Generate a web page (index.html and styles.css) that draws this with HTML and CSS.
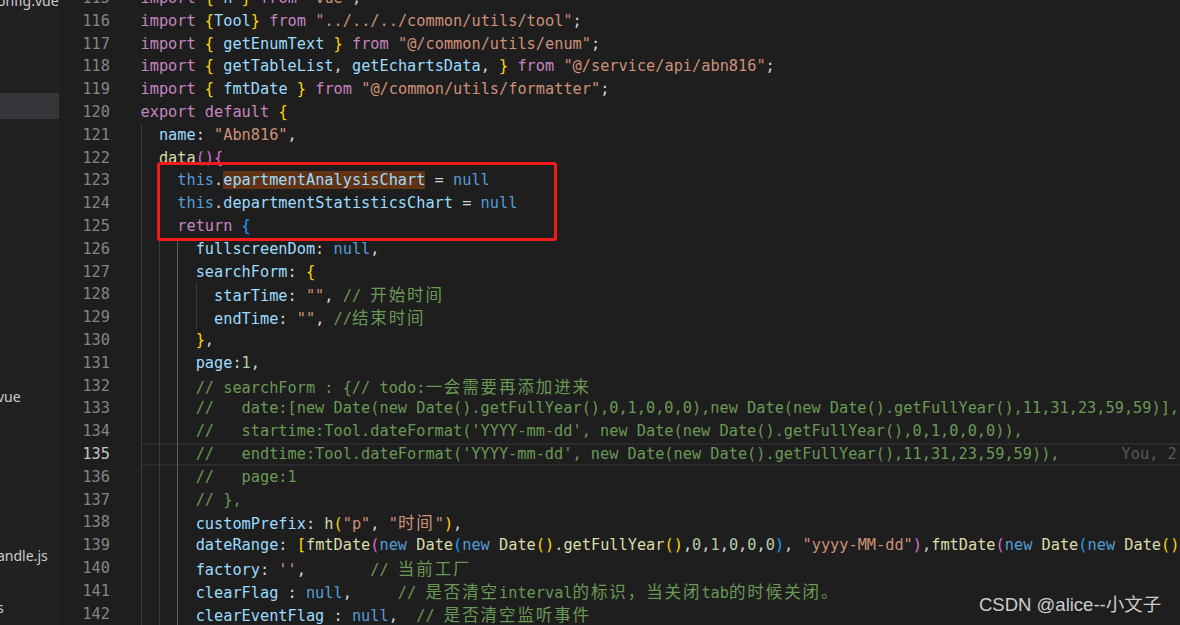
FILE: index.html
```html
<!DOCTYPE html>
<html lang="zh-CN">

<head>
    <meta charset="UTF-8">
    <meta name="viewport" content="width=device-width, initial-scale=1.0">
    <title>Abn816.vue</title>
    <link rel="stylesheet" href="styles.css">
</head>

<body>

    <div class="window">

        <!-- 文件树 (被横向滚动裁掉了) -->
        <div class="sidebar">
            <div class="tree">
                <div class="item">onfig.vue</div>
                <div class="item"></div>
                <div class="item"></div>
                <div class="item"></div>
                <div class="item active"></div>
                <div class="item"></div>
                <div class="item"></div>
                <div class="item"></div>
                <div class="item"></div>
                <div class="item"></div>
                <div class="item"></div>
                <div class="item"></div>
                <div class="item"></div>
                <div class="item"></div>
                <div class="item"></div>
                <div class="item">vue</div>
                <div class="item"></div>
                <div class="item"></div>
                <div class="item"></div>
                <div class="item"></div>
                <div class="item"></div>
                <div class="item">andle.js</div>
                <div class="item"></div>
                <div class="item">s</div>
            </div>
        </div>

        <!-- 编辑器 -->
        <div class="editor">
            <div class="lines">
                <div class="line"><span class="num">115</span><span class="src"><span class="kw">import</span> <span class="b1">{</span> <span class="vr">h</span> <span class="b1">}</span> <span class="kw">from</span> <span class="s">"vue"</span>;</span></div>
                <div class="line"><span class="num">116</span><span class="src"><span class="kw">import</span> <span class="b1">{</span><span class="vr">Tool</span><span class="b1">}</span> <span class="kw">from</span> <span class="s">"../../../common/utils/tool"</span>;</span></div>
                <div class="line"><span class="num">117</span><span class="src"><span class="kw">import</span> <span class="b1">{</span> <span class="vr">getEnumText</span> <span class="b1">}</span> <span class="kw">from</span> <span class="s">"@/common/utils/enum"</span>;</span></div>
                <div class="line"><span class="num">118</span><span class="src"><span class="kw">import</span> <span class="b1">{</span> <span class="vr">getTableList</span>, <span class="vr">getEchartsData</span>, <span class="b1">}</span> <span class="kw">from</span> <span class="s">"@/service/api/abn816"</span>;</span></div>
                <div class="line"><span class="num">119</span><span class="src"><span class="kw">import</span> <span class="b1">{</span> <span class="vr">fmtDate</span> <span class="b1">}</span> <span class="kw">from</span> <span class="s">"@/common/utils/formatter"</span>;</span></div>
                <div class="line"><span class="num">120</span><span class="src"><span class="kw">export</span> <span class="kw">default</span> <span class="b1">{</span></span></div>
                <div class="line"><span class="num">121</span><span class="src"><span class="g"></span><span class="vr">name</span>: <span class="s">"Abn816"</span>,</span></div>
                <div class="line"><span class="num">122</span><span class="src"><span class="g"></span><span class="fn">data</span><span class="b2">(){</span></span></div>
                <div class="line"><span class="num">123</span><span class="src"><span class="g"></span><span class="g"></span><span class="st">this</span>.<span class="vr find">epartmentAnalysisChart</span> = <span class="st">null</span></span></div>
                <div class="line"><span class="num">124</span><span class="src"><span class="g"></span><span class="g"></span><span class="st">this</span>.<span class="vr">departmentStatisticsChart</span> = <span class="st">null</span></span></div>
                <div class="line"><span class="num">125</span><span class="src"><span class="g"></span><span class="g"></span><span class="kw">return</span> <span class="b3">{</span></span></div>
                <div class="line"><span class="num">126</span><span class="src"><span class="g"></span><span class="g"></span><span class="g on"></span><span class="vr">fullscreenDom</span>: <span class="st">null</span>,</span></div>
                <div class="line"><span class="num">127</span><span class="src"><span class="g"></span><span class="g"></span><span class="g on"></span><span class="vr">searchForm</span>: <span class="b1">{</span></span></div>
                <div class="line"><span class="num">128</span><span class="src"><span class="g"></span><span class="g"></span><span class="g on"></span><span class="g"></span><span class="vr">starTime</span>: <span class="s">""</span>, <span class="c">// <span class="zh">开始时间</span></span></span></div>
                <div class="line"><span class="num">129</span><span class="src"><span class="g"></span><span class="g"></span><span class="g on"></span><span class="g"></span><span class="vr">endTime</span>: <span class="s">""</span>, <span class="c">//<span class="zh">结束时间</span></span></span></div>
                <div class="line"><span class="num">130</span><span class="src"><span class="g"></span><span class="g"></span><span class="g on"></span><span class="b1">}</span>,</span></div>
                <div class="line"><span class="num">131</span><span class="src"><span class="g"></span><span class="g"></span><span class="g on"></span><span class="vr">page</span>:<span class="n">1</span>,</span></div>
                <div class="line"><span class="num">132</span><span class="src"><span class="g"></span><span class="g"></span><span class="g on"></span><span class="c">// searchForm : {// todo:<span class="zh">一会需要再添加进来</span></span></span></div>
                <div class="line"><span class="num">133</span><span class="src"><span class="g"></span><span class="g"></span><span class="g on"></span><span class="c">//   date:[new Date(new Date().getFullYear(),0,1,0,0,0),new Date(new Date().getFullYear(),11,31,23,59,59)],</span></span></div>
                <div class="line"><span class="num">134</span><span class="src"><span class="g"></span><span class="g"></span><span class="g on"></span><span class="c">//   startime:Tool.dateFormat('YYYY-mm-dd', new Date(new Date().getFullYear(),0,1,0,0,0)),</span></span></div>
                <div class="line current"><span class="num">135</span><span class="src"><span class="g"></span><span class="g"></span><span class="g on"></span><span class="c">//   endtime:Tool.dateFormat('YYYY-mm-dd', new Date(new Date().getFullYear(),11,31,23,59,59)),</span><span class="blame">You, 2 weeks ago • Uncommitted changes</span></span></div>
                <div class="line"><span class="num">136</span><span class="src"><span class="g"></span><span class="g"></span><span class="g on"></span><span class="c">//   page:1</span></span></div>
                <div class="line"><span class="num">137</span><span class="src"><span class="g"></span><span class="g"></span><span class="g on"></span><span class="c">// },</span></span></div>
                <div class="line"><span class="num">138</span><span class="src"><span class="g"></span><span class="g"></span><span class="g on"></span><span class="vr">customPrefix</span>: <span class="fn">h</span><span class="b1">(</span><span class="s">"p"</span>, <span class="s">"<span class="zh">时间</span>"</span><span class="b1">)</span>,</span></div>
                <div class="line"><span class="num">139</span><span class="src"><span class="g"></span><span class="g"></span><span class="g on"></span><span class="vr">dateRange</span>: <span class="b1">[</span><span class="fn">fmtDate</span><span class="b2">(</span><span class="st">new</span> <span class="fn">Date</span><span class="b3">(</span><span class="st">new</span> <span class="fn">Date</span><span class="b1">()</span>.<span class="fn">getFullYear</span><span class="b1">()</span>,<span class="n">0</span>,<span class="n">1</span>,<span class="n">0</span>,<span class="n">0</span>,<span class="n">0</span><span class="b3">)</span>, <span class="s">"yyyy-MM-dd"</span><span class="b2">)</span>,<span class="fn">fmtDate</span><span class="b2">(</span><span class="st">new</span> <span class="fn">Date</span><span class="b3">(</span><span class="st">new</span> <span class="fn">Date</span><span class="b1">()</span>.<span class="fn">getFullYear</span><span class="b1">()</span>,<span class="n">11</span>,<span class="n">31</span>,<span class="n">23</span>,<span class="n">59</span>,<span class="n">59</span><span class="b3">)</span>, <span class="s">"yyyy-MM-dd"</span><span class="b2">)</span><span class="b1">]</span>,</span></div>
                <div class="line"><span class="num">140</span><span class="src"><span class="g"></span><span class="g"></span><span class="g on"></span><span class="vr">factory</span>: <span class="s">''</span>,       <span class="c">// <span class="zh">当前工厂</span></span></span></div>
                <div class="line"><span class="num">141</span><span class="src"><span class="g"></span><span class="g"></span><span class="g on"></span><span class="vr">clearFlag</span> : <span class="st">null</span>,     <span class="c">// <span class="zh">是否清空</span>interval<span class="zh">的标识，当关闭</span>tab<span class="zh">的时候关闭。</span></span></span></div>
                <div class="line"><span class="num">142</span><span class="src"><span class="g"></span><span class="g"></span><span class="g on"></span><span class="vr">clearEventFlag</span> : <span class="st">null</span>,  <span class="c">// <span class="zh">是否清空监听事件</span></span></span></div>
            </div>
        </div>

        <!-- 截图上的红框标注 -->
        <div class="mark"></div>

        <div class="watermark">CSDN @alice--小文子</div>
    </div>

</body>

</html>
```

FILE: styles.css
```css
* {
    box-sizing: border-box;
}

body {
    margin: 0;
    background-color: #1e1e1e;
    overflow: hidden;
}

.window {
    position: relative;
    display: flex;
    height: 625px;
    overflow: hidden;
}

/* 左边文件树 */
.sidebar {
    width: 59px;
    flex: none;
    background-color: #212121;
    color: #cccccc;
    font-family: "Noto Sans", "Open Sans", sans-serif;
    font-size: 14px;
    overflow: hidden;
}

.tree {
    margin-top: -11.6px;
}

.item {
    height: 26.4px;
    line-height: 26.4px;
    white-space: nowrap;
    text-indent: -3px;
}

.item.active {
    margin-top: -1px;
    margin-bottom: 1px;
    background-color: #35353a;
}

/* 编辑器 */
.editor {
    flex: 1;
    min-width: 0;
    overflow: hidden;
    font-family: "DejaVu Sans Mono", "Liberation Mono", monospace;
    font-size: 15.28px;
    color: #d4d4d4;
}

.lines {
    margin-top: -13px;
}

.line {
    display: flex;
    height: 22.8px;
    line-height: 22.8px;
}

.num {
    width: 51px;
    flex: none;
    text-align: right;
    color: #858585;
}

.src {
    flex: 1 0 auto;
    margin-left: 30.5px;
    white-space: pre;
}

.current .num {
    color: #c6c6c6;
}

.current .src {
    box-shadow: inset 0 2px 0 #2a2a2a, inset 0 -2px 0 #2a2a2a;
}

/* 缩进参考线 */
.g {
    display: inline-block;
    width: 2ch;
    height: 22.8px;
    vertical-align: top;
    border-left: 1px solid #3c3c3c;
}

.g.on {
    border-left-color: #5c5c5c;
}

/* 语法颜色 */
.kw { color: #c586c0; }
.st { color: #569cd6; }
.vr { color: #9cdcfe; }
.fn { color: #dcdcaa; }
.s  { color: #ce9178; }
.n  { color: #b5cea8; }
.c  { color: #6a9955; }
.b1 { color: #ffd700; }
.b2 { color: #da70d6; }
.b3 { color: #179fff; }

.find {
    background-color: #613214;
}

.zh {
    font-family: "Noto Sans CJK SC", sans-serif;
    font-size: 16.5px;
    letter-spacing: 1.9px;
}

.blame {
    margin-left: 62px;
    color: #5a5a5a;
}

.mark {
    position: absolute;
    left: 157px;
    top: 162px;
    width: 400px;
    height: 79px;
    border: 3px solid #f01c1c;
    border-radius: 3px;
}

.watermark {
    position: absolute;
    left: 979px;
    top: 594px;
    line-height: 22px;
    font-family: "Liberation Sans", "Noto Sans CJK SC", sans-serif;
    font-size: 18.5px;
    color: rgba(255, 255, 255, 0.78);
    white-space: nowrap;
}
```
